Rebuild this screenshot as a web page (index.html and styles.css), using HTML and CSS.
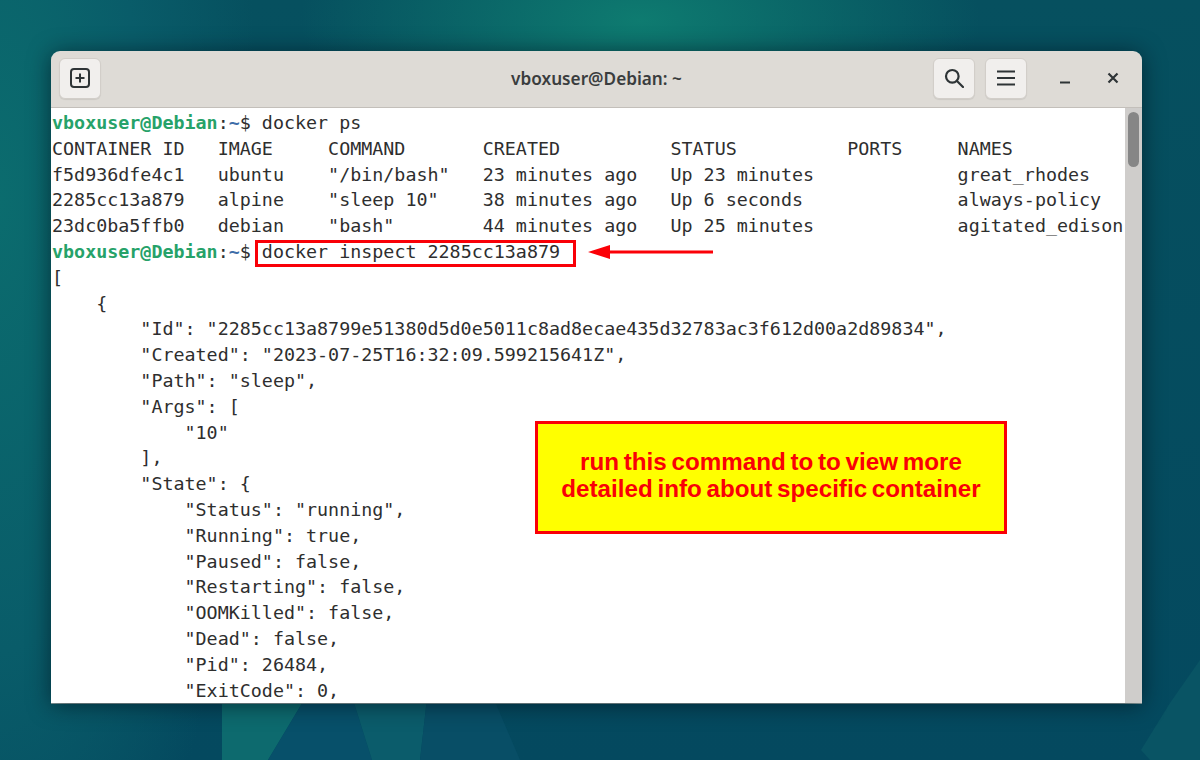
FILE: index.html
```html
<!DOCTYPE html>
<html lang="en">
<head>
<meta charset="utf-8">
<title>vboxuser@Debian: ~</title>
<link rel="stylesheet" href="styles.css">
</head>
<body>
<div class="desktop">
  <svg class="wallpaper" viewBox="0 0 1200 760" aria-hidden="true">
    <polygon points="222,690 310,690 268,760 222,760" fill="#0d6a6e"/>
    <polygon points="310,690 350,690 372,760 268,760" fill="#07506a"/>
    <polygon points="350,690 428,690 420,760 372,760" fill="#0b5c6b"/>
    <polygon points="428,690 490,690 520,760 420,760" fill="#084e66"/>
    <polygon points="1141,750 1170,703 1200,660 1200,760 1150,760" fill="#095464"/>
  </svg>

  <main class="window">
    <header class="titlebar">
      <button class="tbtn" type="button" aria-label="New tab">
        <svg width="20" height="20" viewBox="0 0 20 20" fill="none" stroke="#2e3436" stroke-width="2"><rect x="1" y="1" width="18" height="18" rx="3"/><path d="M10 5.500v9M5.500 10h9"/></svg>
      </button>
      <h1 class="title">vboxuser@Debian: ~</h1>
      <div class="actions">
        <button class="tbtn" type="button" aria-label="Search">
          <svg width="20" height="20" viewBox="0 0 20 20" fill="none" stroke="#2e3436" stroke-width="2.200"><circle cx="8.300" cy="8.300" r="6.300"/><path d="M13 13l6 6" stroke-linecap="round"/></svg>
        </button>
        <button class="tbtn" type="button" aria-label="Menu">
          <svg width="20" height="20" viewBox="0 0 20 20" fill="none" stroke="#2e3436" stroke-width="2"><path d="M1 3.500h18M1 10h18M1 16.500h18"/></svg>
        </button>
        <button class="wbtn" type="button" aria-label="Minimize">
          <svg width="12" height="12" viewBox="0 0 12 12" fill="none" stroke="#2e3436" stroke-width="2"><path d="M1 10.500h10"/></svg>
        </button>
        <button class="wbtn" type="button" aria-label="Close">
          <svg width="12" height="12" viewBox="0 0 12 12" fill="none" stroke="#2e3436" stroke-width="2.200"><path d="M1.500 1.500l9 9M10.500 1.500l-9 9"/></svg>
        </button>
      </div>
    </header>
    <div class="body">
      <div class="term">
        <div class="ln"><span class="u">vboxuser@Debian</span>:<span class="p">~</span>$ docker ps</div>
        <div class="ln">CONTAINER ID   IMAGE     COMMAND       CREATED          STATUS          PORTS     NAMES</div>
        <div class="ln">f5d936dfe4c1   ubuntu    "/bin/bash"   23 minutes ago   Up 23 minutes             great_rhodes</div>
        <div class="ln">2285cc13a879   alpine    "sleep 10"    38 minutes ago   Up 6 seconds              always-policy</div>
        <div class="ln">23dc0ba5ffb0   debian    "bash"        44 minutes ago   Up 25 minutes             agitated_edison</div>
        <div class="ln"><span class="u">vboxuser@Debian</span>:<span class="p">~</span>$ docker inspect 2285cc13a879</div>
        <div class="ln">[</div>
        <div class="ln">    {</div>
        <div class="ln">        "Id": "2285cc13a8799e51380d5d0e5011c8ad8ecae435d32783ac3f612d00a2d89834",</div>
        <div class="ln">        "Created": "2023-07-25T16:32:09.599215641Z",</div>
        <div class="ln">        "Path": "sleep",</div>
        <div class="ln">        "Args": [</div>
        <div class="ln">            "10"</div>
        <div class="ln">        ],</div>
        <div class="ln">        "State": {</div>
        <div class="ln">            "Status": "running",</div>
        <div class="ln">            "Running": true,</div>
        <div class="ln">            "Paused": false,</div>
        <div class="ln">            "Restarting": false,</div>
        <div class="ln">            "OOMKilled": false,</div>
        <div class="ln">            "Dead": false,</div>
        <div class="ln">            "Pid": 26484,</div>
        <div class="ln">            "ExitCode": 0,</div>
      </div>
      <div class="scroll"><div class="thumb"></div></div>
      <div class="mark"></div>
      <svg class="arrow" width="125" height="16" viewBox="0 0 125 16" aria-hidden="true"><path d="M0 8L22 1v5.500h103v3H22V15z" fill="#fb0007"/></svg>
      <div class="note">run this command to to view more<br>detailed info about specific container</div>
    </div>
  </main>
</div>
</body>
</html>
```
FILE: styles.css
```css
* { box-sizing: border-box; }
html, body { margin: 0; padding: 0; }
body { width: 1200px; height: 760px; overflow: hidden; }
.desktop {
  position: relative; width: 1200px; height: 760px; overflow: hidden;
  background:
    radial-gradient(ellipse 340px 150px at 640px 20px, #0e7b70 0%, rgba(14, 123, 112, 0) 100%),
    radial-gradient(ellipse 260px 820px at 0 200px, #0b6c6e 0%, #095c69 55%, rgba(5, 79, 96, 0) 100%),
    linear-gradient(180deg, #06505f 0, #04495f 100%);
}
.wallpaper { position: absolute; left: 0; top: 0; width: 1200px; height: 760px; }
.window {
  position: absolute; left: 51px; top: 51px; width: 1091px; height: 652px;
  display: flex; flex-direction: column;
  border-radius: 9px 9px 0 0;
  box-shadow: 0 2px 22px rgba(0, 15, 25, 0.6), 0 1px 0 #8fa3a3;
}
.titlebar {
  height: 57px; flex: none; display: flex; align-items: center; position: relative;
  padding: 0 5px 2px 8px; background: #dedbd6; border-bottom: 1px solid #c3bfba;
  border-radius: 9px 9px 0 0;
}
.title {
  position: absolute; left: 0; right: 0; top: 18px; margin: 0; text-align: center;
  font: 600 17.200px/20px "Noto Sans", "Open Sans", sans-serif; color: #3a3d3e;
}
.actions { margin-left: auto; display: flex; align-items: center; }
.tbtn {
  width: 42px; height: 41px; padding: 0; display: flex; align-items: center; justify-content: center;
  background: #f1efed; border: 1px solid #d2cec9; border-radius: 6px;
  box-shadow: 0 1px 1px rgba(0, 0, 0, 0.08);
}
.actions .tbtn { margin-right: 10px; }
.actions .tbtn + .tbtn { margin-right: 14px; }
.wbtn {
  width: 48px; height: 41px; padding: 0; display: flex; align-items: center; justify-content: center;
  background: none; border: 0;
}
.body { flex: 1; min-height: 0; position: relative; background: #fff; overflow: hidden; display: flex; }
.term {
  flex: 1; min-width: 0; padding: 2px 0 0 1px; overflow: hidden;
  font: 18.350px/25.800px "DejaVu Sans Mono", monospace; color: #2e2e2e;
}
.ln { height: 25.800px; white-space: pre; }
.u { color: #26a269; font-weight: 700; }
.p { color: #3f6ea8; font-weight: 700; }
.scroll { width: 17px; flex: none; background: #cfcdcb; position: relative; padding: 4px 3px 0 3px; }
.thumb { width: 11px; height: 55px; border-radius: 6px; background: #868686; }
.mark {
  position: absolute; left: 204px; top: 132px; width: 321px; height: 27px;
  border: 3px solid #f90007;
}
.arrow { position: absolute; left: 537px; top: 136px; }
.note {
  position: absolute; left: 484px; top: 313px; width: 472px; height: 113px;
  display: flex; align-items: center; justify-content: center; text-align: center; padding-bottom: 6px;
  background: #ffff00; border: 3px solid #f90007; color: #f90007;
  font: 700 24.200px/27px "Liberation Sans", Arial, sans-serif; word-spacing: -2px;
}
```
